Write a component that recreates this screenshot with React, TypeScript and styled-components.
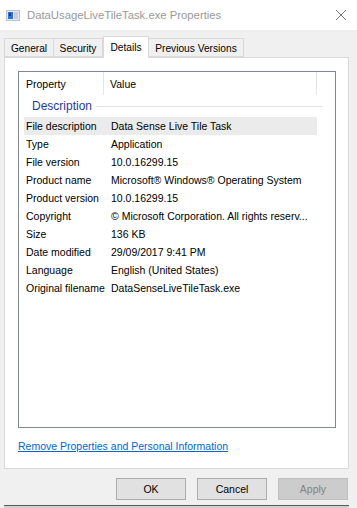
import React from 'react';
import styled, { createGlobalStyle } from 'styled-components';

const GlobalStyle = createGlobalStyle`
  html, body {
    margin: 0;
    padding: 0;
    background: #f0f0f0;
    overflow: hidden;
  }
  * {
    box-sizing: border-box;
  }
`;

const Window = styled.div`
  width: 357px;
  height: 508px;
  display: flex;
  flex-direction: column;
  background: #f0f0f0;
  font-family: 'Liberation Sans', Arial, sans-serif;
  font-size: 10.5px;
  color: #000;
`;

const TitleBar = styled.div`
  height: 30px;
  flex-shrink: 0;
  background: #fff;
  display: flex;
  align-items: center;
  padding-left: 6px;
`;

const TitleText = styled.span`
  margin-left: 7px;
  font-size: 11.3px;
  color: #999;
  flex: 1;
`;

const CloseButton = styled.div`
  width: 10px;
  height: 10px;
  margin-right: 11px;
  display: flex;
`;

const Body = styled.div`
  flex: 1;
  display: flex;
  flex-direction: column;
  padding: 6px 8px 0 4px;
`;

const TabStrip = styled.div`
  display: flex;
  align-items: flex-end;
  height: 21px;
`;

const Tab = styled.div<{ $width: number; $active?: boolean }>`
  width: ${(p) => p.$width}px;
  height: ${(p) => (p.$active ? 22 : 19)}px;
  margin-bottom: ${(p) => (p.$active ? -1 : 0)}px;
  background: ${(p) => (p.$active ? '#fff' : '#f0f0f0')};
  border: 1px solid #d9d9d9;
  border-bottom: ${(p) => (p.$active ? 'none' : '1px solid #d9d9d9')};
  border-left: ${(p) => (p.$active ? '1px solid #d9d9d9' : 'none')};
  display: flex;
  align-items: center;
  justify-content: center;
  font-size: 10.2px;
  position: relative;
  z-index: ${(p) => (p.$active ? 1 : 0)};
  padding-top: 1px;
  padding-bottom: ${(p) => (p.$active ? 2 : 0)}px;

  &:first-child {
    border-left: 1px solid #d9d9d9;
  }
`;

const Panel = styled.div`
  height: 412px;
  background: #fff;
  border: 1px solid #d9d9d9;
  padding: 13px 0 0 13px;
  display: flex;
  flex-direction: column;
`;

const ListBox = styled.div`
  width: 318px;
  height: 357px;
  border: 1px solid #828790;
  display: flex;
  flex-direction: column;
`;

const HeaderRow = styled.div`
  height: 24px;
  display: grid;
  grid-template-columns: 85px 213px;
  align-items: stretch;
`;

const HeaderCell = styled.div<{ $pad: number }>`
  display: flex;
  align-items: center;
  padding-left: ${(p) => p.$pad}px;
  border-right: 1px solid #e5e5e5;
  margin-bottom: 1px;
`;

const GroupHeader = styled.div`
  height: 21px;
  display: flex;
  align-items: center;
  padding: 0 12px 1px 13px;
  gap: 4px;
`;

const GroupTitle = styled.span`
  font-size: 12px;
  color: #1f3b97;
`;

const GroupLine = styled.div`
  flex: 1;
  height: 1px;
  background: #e2e2e2;
`;

const Row = styled.div<{ $selected?: boolean }>`
  height: 18px;
  margin: 0 18px 0 5px;
  padding-left: 2px;
  display: grid;
  grid-template-columns: 85px 1fr;
  align-items: center;
  background: ${(p) => (p.$selected ? '#ebebeb' : 'transparent')};
  white-space: nowrap;
  overflow: hidden;
`;

const Link = styled.a`
  margin-top: 12px;
  color: #0066cc;
  text-decoration: underline;
  font-size: 10.5px;
  line-height: 13px;
`;

const ButtonRow = styled.div`
  display: flex;
  justify-content: flex-end;
  gap: 11px;
  margin-top: 9px;
  padding-right: 1px;
`;

const Button = styled.button<{ $disabled?: boolean }>`
  width: 70px;
  height: 22px;
  border: 1px solid ${(p) => (p.$disabled ? '#bfbfbf' : '#adadad')};
  background: ${(p) => (p.$disabled ? '#cccccc' : '#e1e1e1')};
  color: ${(p) => (p.$disabled ? '#838383' : '#000')};
  font-family: 'Liberation Sans', Arial, sans-serif;
  font-size: 10.5px;
  padding: 0;
`;

const BottomEdge = styled.div`
  margin-top: auto;
  height: 3px;
  border-top: 1px solid #5a5a5a;
  background: #cfcfcf;
`;

const rows: [string, string][] = [
  ['File description', 'Data Sense Live Tile Task'],
  ['Type', 'Application'],
  ['File version', '10.0.16299.15'],
  ['Product name', 'Microsoft® Windows® Operating System'],
  ['Product version', '10.0.16299.15'],
  ['Copyright', '© Microsoft Corporation. All rights reserv...'],
  ['Size', '136 KB'],
  ['Date modified', '29/09/2017 9:41 PM'],
  ['Language', 'English (United States)'],
  ['Original filename', 'DataSenseLiveTileTask.exe'],
];

const tabs = [
  { label: 'General', width: 50 },
  { label: 'Security', width: 49 },
  { label: 'Details', width: 46, active: true },
  { label: 'Previous Versions', width: 95 },
];

const AppIcon = () => (
  <svg width="14" height="11" viewBox="0 0 14 11">
    <rect x="0.5" y="0.5" width="13" height="10" fill="#e6e9ee" stroke="#b9c0c9" />
    <rect x="2" y="2" width="5" height="7" fill="#2b73d6" />
    <rect x="3" y="3" width="2" height="3" fill="#1b3f8a" />
    <rect x="8" y="2" width="4" height="7" fill="#c9ced6" />
  </svg>
);

const App: React.FC = () => {
  return (
    <>
      <GlobalStyle />
      <Window>
        <TitleBar>
          <AppIcon />
          <TitleText>DataUsageLiveTileTask.exe Properties</TitleText>
          <CloseButton>
            <svg width="10" height="10" viewBox="0 0 10 10">
              <path d="M0 0 L10 10 M10 0 L0 10" stroke="#777" strokeWidth="1" />
            </svg>
          </CloseButton>
        </TitleBar>
        <Body>
          <TabStrip>
            {tabs.map((t) => (
              <Tab key={t.label} $width={t.width} $active={t.active}>
                {t.label}
              </Tab>
            ))}
          </TabStrip>
          <Panel>
            <ListBox>
              <HeaderRow>
                <HeaderCell $pad={7}>Property</HeaderCell>
                <HeaderCell $pad={6}>Value</HeaderCell>
              </HeaderRow>
              <GroupHeader>
                <GroupTitle>Description</GroupTitle>
                <GroupLine />
              </GroupHeader>
              {rows.map(([label, value], i) => (
                <Row key={label} $selected={i === 0}>
                  <span>{label}</span>
                  <span>{value}</span>
                </Row>
              ))}
            </ListBox>
            <Link href="#">Remove Properties and Personal Information</Link>
          </Panel>
          <ButtonRow>
            <Button>OK</Button>
            <Button>Cancel</Button>
            <Button $disabled>Apply</Button>
          </ButtonRow>
          <BottomEdge />
        </Body>
      </Window>
    </>
  );
};

export default App;
